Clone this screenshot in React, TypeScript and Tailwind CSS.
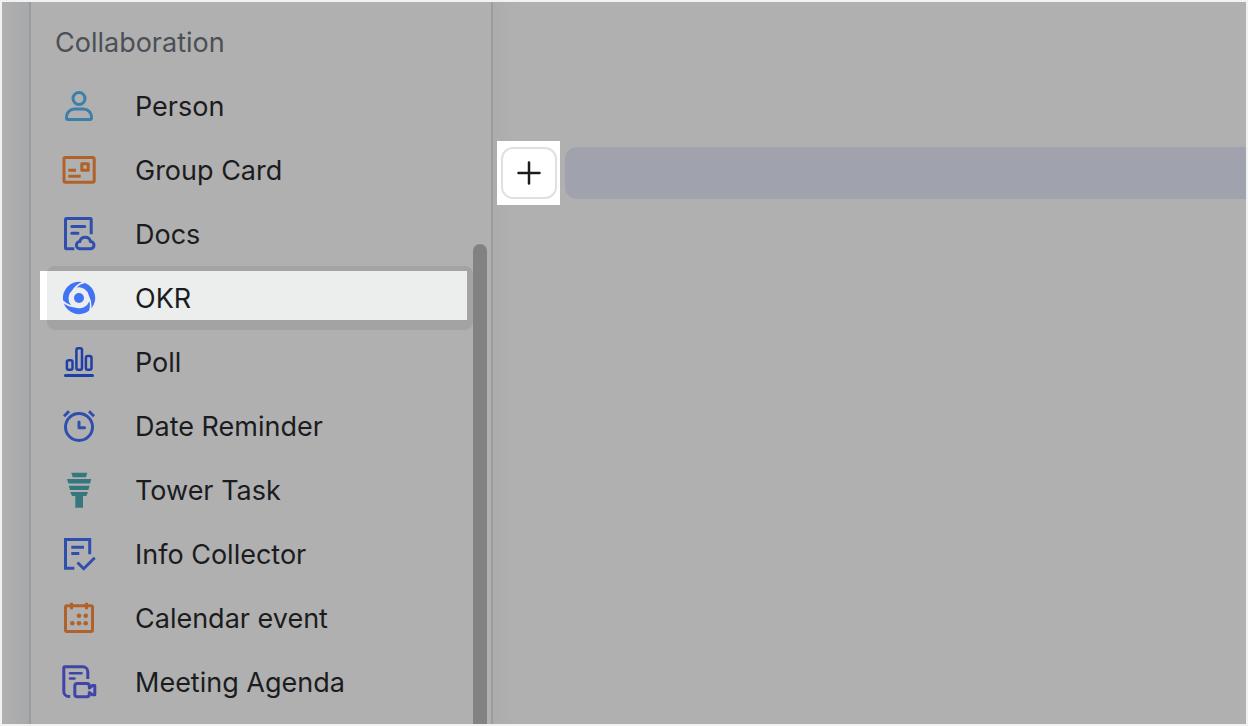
import type { ReactNode } from 'react'

type Item = {
  label: string
  color: string
  icon: ReactNode
  active?: boolean
}

const blade = 'M4.800 25.600A16.200 16.200 0 0 0 30 32.700Q31.600 28 30.300 23.200A10.600 10.600 0 0 1 17 29.800Q10.500 29.500 4.800 25.600z'

const items: Item[] = [
  {
    label: 'Person',
    color: 'text-[#3b7fab]',
    icon: (
      <>
        <circle cx="20" cy="12.5" r="6" />
        <path d="M15.5 23h9a8 8 0 0 1 8 8v1a1.5 1.5 0 0 1-1.5 1.5H9A1.5 1.5 0 0 1 7.5 32v-1a8 8 0 0 1 8-8z" />
      </>
    ),
  },
  {
    label: 'Group Card',
    color: 'text-[#b1622b]',
    icon: (
      <>
        <rect x="5" y="7.5" width="30.2" height="24.7" rx="1.5" />
        <rect x="22.8" y="13.8" width="6.4" height="6.4" />
        <path strokeLinecap="butt" d="M9.3 20.3H17M9.3 26.2h12.4" />
      </>
    ),
  },
  {
    label: 'Docs',
    color: 'text-[#2f4fae]',
    icon: (
      <>
        <path strokeLinecap="butt" d="M32.2 20.3V5.5a1 1 0 0 0-1-1H7.5a1 1 0 0 0-1 1v28.3a1 1 0 0 0 1 1h7.8" />
        <path d="M12.8 12.5h13M12.8 19.2h6.2" />
        <path d="M21.2 34.8a3.6 3.6 0 0 1-.4-7.2 5.5 5.5 0 0 1 10.8 0 3.6 3.6 0 0 1-.4 7.2z" />
      </>
    ),
  },
  {
    label: 'OKR',
    color: 'text-[#4373f5]',
    active: true,
    icon: (
      <g fill="currentColor" stroke="none">
        <path d={blade} />
        <path d={blade} transform="rotate(120 20 20)" />
        <path d={blade} transform="rotate(240 20 20)" />
        <circle cx="20" cy="20" r="5" />
      </g>
    ),
  },
  {
    label: 'Poll',
    color: 'text-[#1f3fa6]',
    icon: (
      <>
        <g strokeWidth="2.5">
          <rect x="7.9" y="18.2" width="5.6" height="9.6" rx="1.8" />
          <rect x="17.4" y="6.2" width="5.6" height="21.6" rx="1.8" />
          <rect x="26.9" y="13.9" width="5.6" height="13.9" rx="1.8" />
        </g>
        <path d="M6.5 33.5h27" />
      </>
    ),
  },
  {
    label: 'Date Reminder',
    color: 'text-[#2f4fae]',
    icon: (
      <>
        <circle cx="20" cy="21" r="13.5" />
        <path strokeLinecap="butt" d="M5 10.3l5-5M30 5.3l5 5" />
        <path d="M20 16v5.7h5.5" />
      </>
    ),
  },
  {
    label: 'Tower Task',
    color: 'text-[#35777f]',
    icon: (
      <path
        fill="currentColor"
        stroke="none"
        d="M12.3 2.7h16l-1.3 4.5H13.7zM8 9h24.3L31 13.4H9.3zM9.7 15.7h21L29.3 20H11zM11.3 22H29l-1.7 4H24v11.7h-7.7V26H13z"
      />
    ),
  },
  {
    label: 'Info Collector',
    color: 'text-[#2f4fae]',
    icon: (
      <path
        strokeLinecap="butt"
        strokeLinejoin="miter"
        d="M30.7 20.3V5.5H6.5v28.8h8.8M12.3 13.2H25M12.3 19.5h8M18.5 28.5l6.2 6.2 11-11"
      />
    ),
  },
  {
    label: 'Calendar event',
    color: 'text-[#b1622b]',
    icon: (
      <>
        <rect x="6.5" y="7.8" width="27" height="25.7" rx="1.5" />
        <path strokeLinecap="butt" d="M12.5 4.7v6.6M27.5 4.7v6.6" />
        <g fill="currentColor" stroke="none">
          <circle cx="20" cy="17.7" r="2.3" />
          <circle cx="26.7" cy="17.7" r="2.3" />
          <circle cx="13.3" cy="25.2" r="2.3" />
          <circle cx="20" cy="25.2" r="2.3" />
          <circle cx="26.7" cy="25.2" r="2.3" />
        </g>
      </>
    ),
  },
  {
    label: 'Meeting Agenda',
    color: 'text-[#3f45a8]',
    icon: (
      <>
        <path strokeLinecap="butt" d="M28.8 17V9.8a5 5 0 0 0-5-5h-18a1 1 0 0 0-1 1v23.7a5 5 0 0 0 5 5h1.4" />
        <path strokeWidth="2.6" d="M11 11.3h11.5M11 16.5h4.5" />
        <path d="M18.3 21.5h9.5a2.5 2.5 0 0 1 2.5 2.500v2l3.200-2.500h2.300v9.300h-2.300L30.300 30.500v1.800a2.500 2.500 0 0 1-2.500 2.500H18.300a2.500 2.500 0 0 1-2.500-2.500V24a2.500 2.500 0 0 1 2.500-2.500z" />
      </>
    ),
  },
]

function MenuItem({ label, color, icon, active }: Item) {
  return (
    <li>
      <button
        type="button"
        className={`relative flex h-16 w-full items-center rounded-lg pl-3 text-left ${active ? 'bg-[#a3a3a3]' : ''}`}
      >
        {active && (
          <span className="absolute top-[5px] -left-[7px] right-[6px] bottom-[10px] flex bg-white pl-[7px]">
            <span className="flex-1 bg-[#eceeed]" />
          </span>
        )}
        <svg
          viewBox="0 0 40 40"
          className={`relative size-10 shrink-0 ${color}`}
          fill="none"
          stroke="currentColor"
          strokeWidth="3"
          strokeLinecap="round"
          strokeLinejoin="round"
          aria-hidden="true"
        >
          {icon}
        </svg>
        <span className="relative ml-9 pt-0.5">{label}</span>
      </button>
    </li>
  )
}

export default function App() {
  return (
    <div className="h-screen bg-[#f1f2f1] p-0.5 font-['Inter',sans-serif] text-[27px] text-[#1b1c1f]">
      <div className="flex h-full overflow-hidden bg-[#b0b0b0]">
        <div className="w-[27px] shrink-0 bg-linear-to-r from-[#b0b0b0] to-[#a8a9aa]" />
        <nav className="relative w-116 shrink-0 border-x-2 border-l-[#999c9e] border-r-[#9c9c9c] px-4">
          <h2 className="flex h-[72px] items-center pt-2.5 pl-2 text-[#4c4f56]">Collaboration</h2>
          <ul className="mr-[2px]">
            {items.map((item) => (
              <MenuItem key={item.label} {...item} />
            ))}
          </ul>
          <div className="absolute top-[242px] right-1 bottom-0 w-[14px] rounded-t-full bg-[#828282]" />
        </nav>
        <main className="flex flex-1 items-start bg-linear-to-r from-[#acacac] to-[#b0b0b0] to-3% pt-[139px]">
          <div className="ml-1 flex h-16 w-[63px] shrink-0 justify-center bg-white pt-[6px]">
            <button
              type="button"
              aria-label="Add block"
              className="flex h-[52px] w-14 items-center justify-center rounded-xl border-2 border-[#dfdfe6]"
            >
              <svg viewBox="0 0 24 24" className="size-6" fill="none" stroke="currentColor" strokeWidth="2.5" strokeLinecap="round">
                <path d="M12 1.5v21M1.5 12h21" />
              </svg>
            </button>
          </div>
          <div className="mt-[6px] ml-[5px] h-[52px] flex-1 rounded-l-xl bg-[#a0a2ae]" />
        </main>
      </div>
    </div>
  )
}
